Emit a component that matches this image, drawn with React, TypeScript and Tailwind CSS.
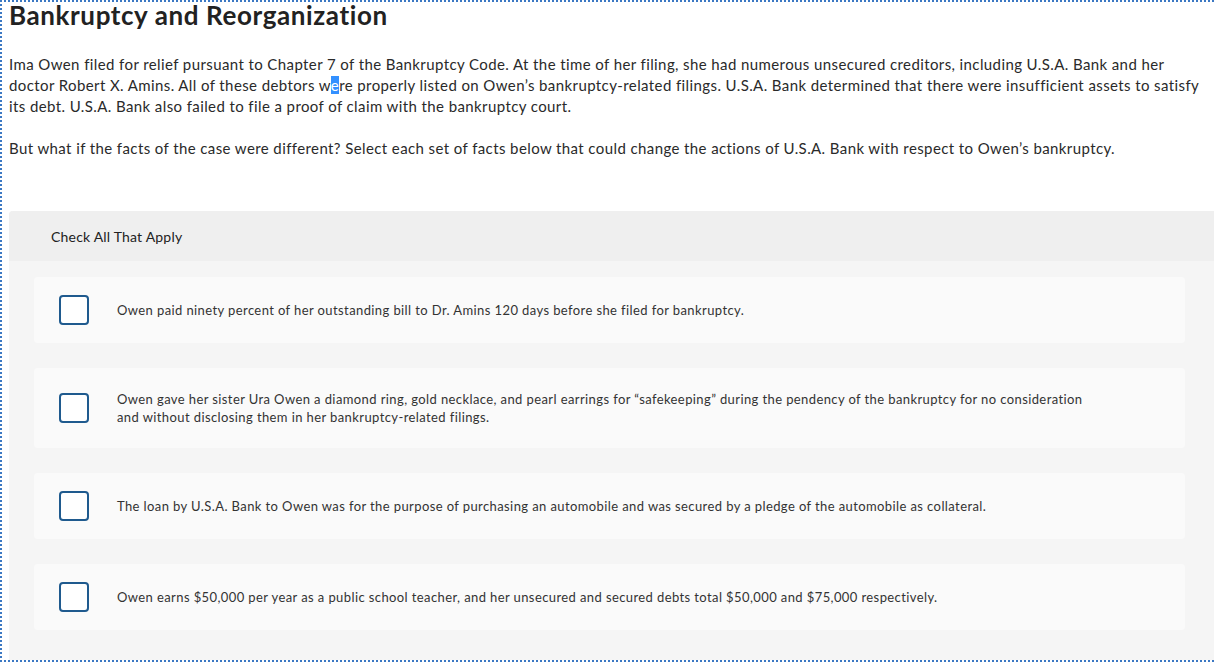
import React from 'react';

const options = [
  ['Owen paid ninety percent of her outstanding bill to Dr. Amins 120 days before she filed for bankruptcy.'],
  [
    'Owen gave her sister Ura Owen a diamond ring, gold necklace, and pearl earrings for \u201csafekeeping\u201d during the pendency of the bankruptcy for no consideration',
    'and without disclosing them in her bankruptcy-related filings.',
  ],
  ['The loan by U.S.A. Bank to Owen was for the purpose of purchasing an automobile and was secured by a pledge of the automobile as collateral.'],
  ['Owen earns $50,000 per year as a public school teacher, and her unsecured and secured debts total $50,000 and $75,000 respectively.'],
];

function Option({ lines }: { lines: string[] }) {
  return (
    <div className="flex items-center rounded bg-[#fafafa] pl-[25px] pr-6 py-[18px]">
      <div className="w-[30px] h-[30px] shrink-0 rounded-[4px] border-2 border-[#1f5a8e] bg-white" />
      <div className="ml-[28px] py-1 text-[13px] leading-[18px] tracking-[0.4px] text-[#333]">
        {lines.map((l, i) => (
          <div key={i} className="whitespace-nowrap">{l}</div>
        ))}
      </div>
    </div>
  );
}

export default function App() {
  return (
    <div
      className="w-[1230px] h-[663px] overflow-hidden bg-white text-[#222]"
      style={{ fontFamily: 'Lato, "Open Sans", sans-serif' }}
    >
      <div className="h-[662px] flex flex-col border-2 border-dotted border-[#3b78c3] pl-[7px]">
        <h1 className="text-[26px] leading-[26px] font-bold tracking-[0.6px] text-[#222]">Bankruptcy and Reorganization</h1>
        <div className="mt-[26px] text-[15px] leading-[21px] tracking-[0.4px] text-[#2a2a2a]">
          <div className="whitespace-nowrap">
            Ima Owen filed for relief pursuant to Chapter 7 of the Bankruptcy Code. At the time of her filing, she had numerous unsecured creditors, including U.S.A. Bank and her
          </div>
          <div className="whitespace-nowrap">
            doctor Robert X. Amins. All of these debtors w<span className="bg-[#3390ff] text-white">e</span>re properly listed on Owen&rsquo;s bankruptcy-related filings. U.S.A. Bank determined that there were insufficient assets to satisfy
          </div>
          <div className="whitespace-nowrap">its debt. U.S.A. Bank also failed to file a proof of claim with the bankruptcy court.</div>
          <div className="mt-[21px] whitespace-nowrap">
            But what if the facts of the case were different? Select each set of facts below that could change the actions of U.S.A. Bank with respect to Owen&rsquo;s bankruptcy.
          </div>
        </div>
        <div className="mt-[52px] flex-1 bg-[#f5f5f5] rounded-tl">
          <div className="h-[50px] flex items-center pl-[42px] bg-[#efefef] text-[14px] tracking-[0.2px] text-[#222] rounded-tl">
            Check All That Apply
          </div>
          <div className="pl-[25px] pt-4 flex flex-col gap-[25px] w-[1176px]">
            {options.map((o, i) => (
              <Option key={i} lines={o} />
            ))}
          </div>
        </div>
      </div>
    </div>
  );
}
